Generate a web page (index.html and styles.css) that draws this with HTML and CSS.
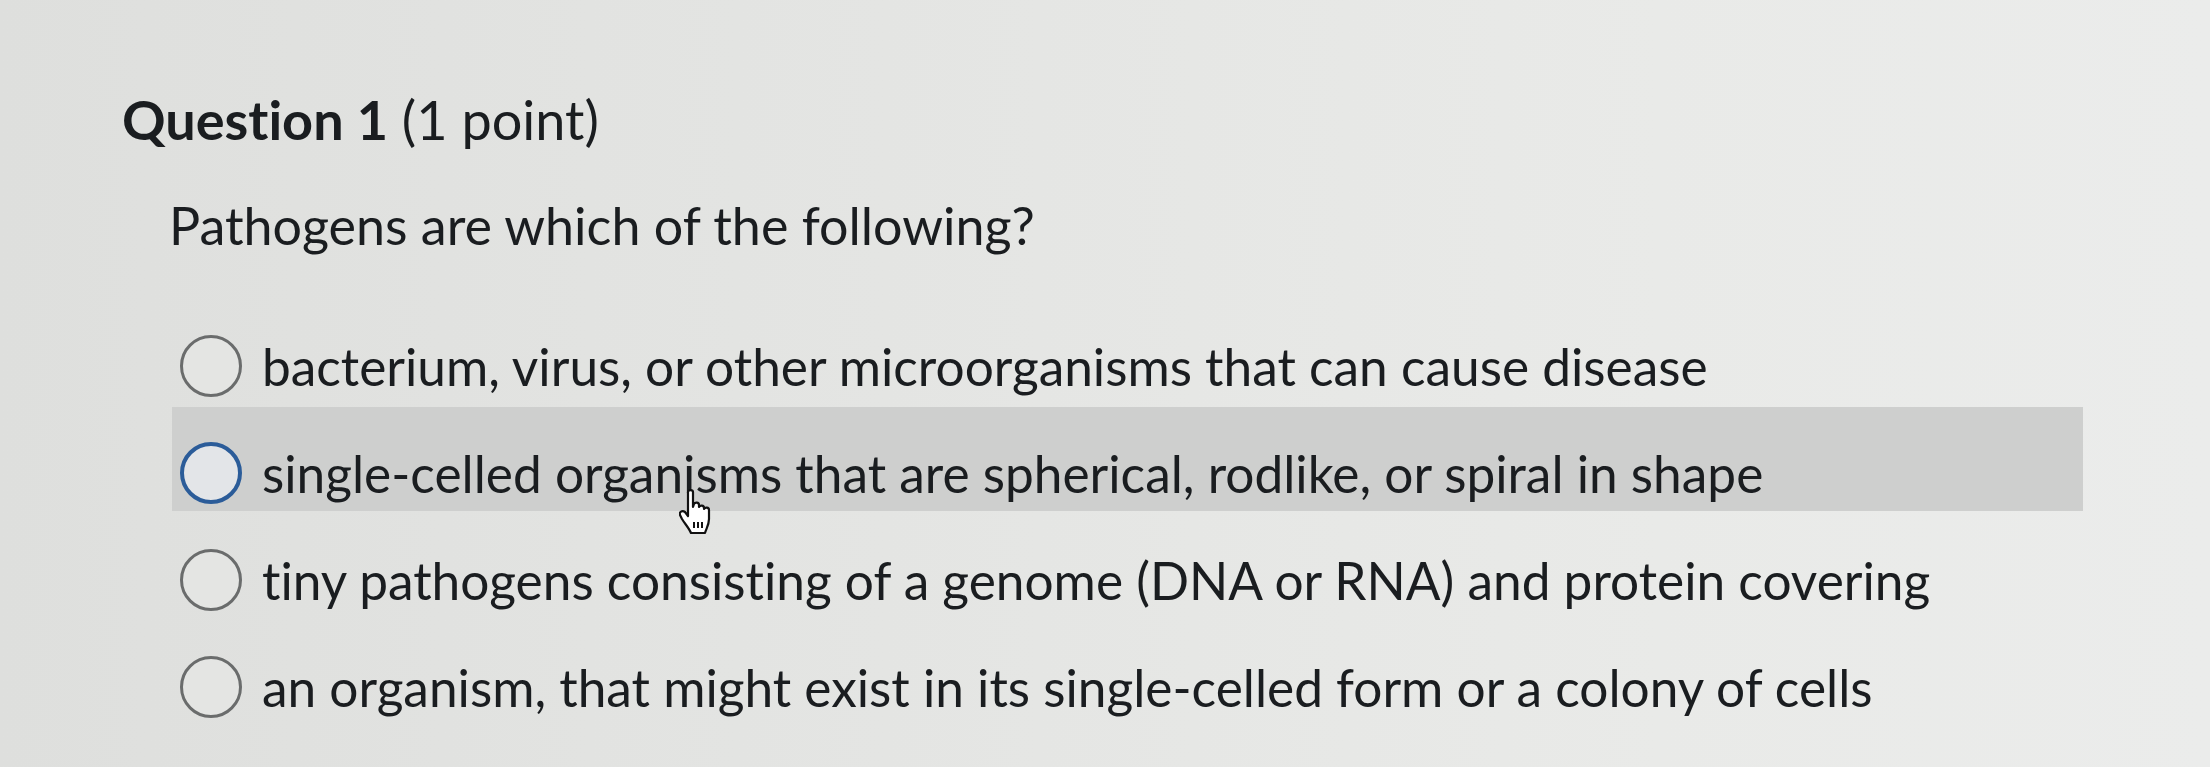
FILE: index.html
```html
<!DOCTYPE html>
<html lang="en">
<head>
<meta charset="utf-8">
<title>Question 1</title>
<link rel="stylesheet" href="styles.css">
</head>
<body>
<main class="page">
  <h1 class="q-title"><strong>Question 1</strong> <span class="q-points">(1 point)</span></h1>
  <p class="q-prompt">Pathogens are which of the following?</p>
  <div class="options">
    <label class="option">
      <span class="radio"></span>
      <span class="opt-text">bacterium, virus, or other microorganisms that can cause disease</span>
    </label>
    <label class="option option-hover">
      <span class="radio radio-focus"></span>
      <span class="opt-text">single-celled organisms that are spherical, rodlike, or spiral in shape</span>
      <svg class="cursor" width="44" height="46" viewBox="0 0 44 46">
        <path d="M9 3 C9 0.5 14 0.5 14 3 L14 18 L15 15 C16 13 20 13 20 16 L20 18 C21 16 25 16 25 19 L25 20 C26 18 30 18 30 21 L30 30 C30 36 27 40 26 44 L12 44 C10 39 6 35 3 30 L1 26 C0 23 3 21 6 23 L9 27 Z" fill="#fff" stroke="#111" stroke-width="2.2" stroke-linejoin="round"/>
        <line x1="15" y1="33" x2="15" y2="39" stroke="#111" stroke-width="2"/>
        <line x1="19" y1="33" x2="19" y2="39" stroke="#111" stroke-width="2"/>
        <line x1="23" y1="33" x2="23" y2="39" stroke="#111" stroke-width="2"/>
      </svg>
    </label>
    <label class="option">
      <span class="radio"></span>
      <span class="opt-text">tiny pathogens consisting of a genome (DNA or RNA) and protein covering</span>
    </label>
    <label class="option">
      <span class="radio"></span>
      <span class="opt-text">an organism, that might exist in its single-celled form or a colony of cells</span>
    </label>
  </div>
</main>
</body>
</html>
```

FILE: styles.css
```css
html, body {
  margin: 0;
  padding: 0;
}
body {
  width: 2210px;
  height: 767px;
  overflow: hidden;
  background: linear-gradient(90deg, #dedfdd 0%, #e4e5e3 40%, #e9eae8 75%, #ebeceb 100%);
  font-family: Lato, "Open Sans", sans-serif;
  color: #1a1d20;
  font-variant-ligatures: none;
  font-feature-settings: "liga" 0, "clig" 0;
}
.page {
  padding: 86px 0 0 122px;
}
.q-title {
  margin: 0;
  font-size: 54px;
  line-height: 67px;
  font-weight: 400;
}
.q-title strong {
  font-weight: 700;
}
.q-prompt {
  margin: 41px 0 0 47px;
  font-size: 52px;
  line-height: 62px;
}
.options {
  margin: 44px 0 0 50px;
}
.option {
  display: flex;
  align-items: center;
  width: 1911px;
  height: 104px;
  margin-top: 3px;
  padding: 28px 0 0 8px;
  box-sizing: border-box;
  position: relative;
}
.options .option:first-child {
  margin-top: 0;
}
.option-hover {
  background: #cecfce;
}
.radio {
  flex: none;
  width: 62px;
  height: 62px;
  border-radius: 50%;
  border: 3px solid #6a6c6c;
  box-sizing: border-box;
  background: #e4e5e3;
}
.radio-focus {
  border: 4px solid #2b5c99;
  background: #e3e5e8;
}
.opt-text {
  margin-left: 20px;
  font-size: 51.4px;
  line-height: 62px;
  white-space: nowrap;
}
.cursor {
  position: absolute;
  left: 507px;
  top: 82px;
}
```
